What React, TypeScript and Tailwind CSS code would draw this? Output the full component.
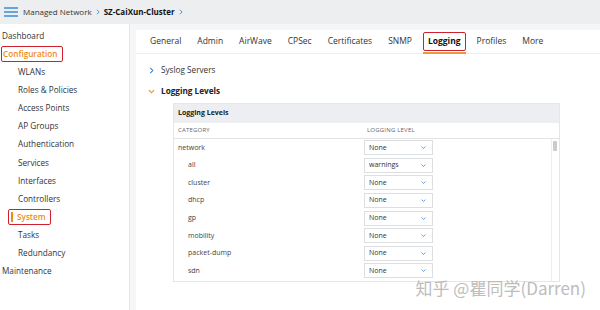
import { FC } from 'react';

const sans = { fontFamily: '"Open Sans", "Noto Sans", "Liberation Sans", sans-serif' };

const subItems = [
  'WLANs',
  'Roles & Policies',
  'Access Points',
  'AP Groups',
  'Authentication',
  'Services',
  'Interfaces',
  'Controllers',
];

const tabs = ['General', 'Admin', 'AirWave', 'CPSec', 'Certificates', 'SNMP', 'Logging', 'Profiles', 'More'];

const rows = [
  { name: 'network', level: 'None', indent: false },
  { name: 'all', level: 'warnings', indent: true },
  { name: 'cluster', level: 'None', indent: true },
  { name: 'dhcp', level: 'None', indent: true },
  { name: 'gp', level: 'None', indent: true },
  { name: 'mobility', level: 'None', indent: true },
  { name: 'packet-dump', level: 'None', indent: true },
  { name: 'sdn', level: 'None', indent: true },
];

const Chevron: FC<{ dir: 'right' | 'down'; className?: string }> = ({ dir, className }) => (
  <svg width="7" height="7" viewBox="0 0 8 8" className={className}>
    {dir === 'right' ? (
      <path d="M2.5 1 L5.5 4 L2.5 7" fill="none" stroke="currentColor" strokeWidth="1.2" />
    ) : (
      <path d="M1 2.5 L4 5.5 L7 2.5" fill="none" stroke="currentColor" strokeWidth="1.2" />
    )}
  </svg>
);

const Sidebar: FC = () => (
  <aside className="w-[130px] shrink-0 border-r border-[#e4e6e8] bg-white pt-[3px] text-[8.2px] text-[#333]">
    <div className="flex h-[18.1px] items-center pl-[2px]">Dashboard</div>
    <div className="flex h-[18.1px] items-center">
      <span className="ml-[1px] flex h-[16px] items-center rounded-[2px] border-[1.5px] border-[#d0202e] pl-[1px] pr-[5px] font-semibold text-[#ef8a17]">
        Configuration
      </span>
    </div>
    {subItems.map((item) => (
      <div key={item} className="flex h-[18.1px] items-center pl-[18px]">
        {item}
      </div>
    ))}
    <div className="flex h-[18.1px] items-center">
      <span className="ml-[8px] flex h-[16px] items-center rounded-[2px] border-[1.5px] border-[#d0202e] pl-[2px] pr-[4px] font-semibold text-[#ef8a17]">
        <span className="mr-[4px] h-[10px] w-[2px] bg-[#ef8a17]" />
        System
      </span>
    </div>
    <div className="flex h-[18.1px] items-center pl-[18px]">Tasks</div>
    <div className="flex h-[18.1px] items-center pl-[18px]">Redundancy</div>
    <div className="flex h-[18.1px] items-center pl-[2px]">Maintenance</div>
  </aside>
);

const Select: FC<{ value: string }> = ({ value }) => (
  <div className="flex h-[15px] w-[69px] items-center justify-between border border-[#dcdfe2] bg-white pl-[4px] pr-[6px] text-[7px] text-[#333]">
    <span>{value}</span>
    <Chevron dir="down" className="h-[5px] w-[5px] text-[#3b7bbf]" />
  </div>
);

const LoggingTable: FC = () => (
  <div className="ml-[37px] w-[387px] border border-[#e4e6e8] bg-white">
    <div className="flex h-[19px] items-center bg-[#eceef1] pl-[4px] text-[7px] font-bold text-[#222]">
      Logging Levels
    </div>
    <div className="flex h-[16px] items-center border-b border-[#e1e3e5] text-[6px] tracking-[0.2px] text-[#666]">
      <span className="w-[193px] pl-[4px]">CATEGORY</span>
      <span>LOGGING LEVEL</span>
    </div>
    <div className="flex">
      <div className="flex-1 pb-[1px]">
        {rows.map((row) => (
          <div key={row.name} className="flex h-[17.6px] items-center text-[7px] text-[#444]">
            <span className={`w-[190px] ${row.indent ? 'pl-[14px]' : 'pl-[4px]'}`}>{row.name}</span>
            <Select value={row.level} />
          </div>
        ))}
      </div>
      <div className="mr-[2px] w-[6px] border-l border-[#eceef0] pt-[2px]">
        <div className="mx-auto h-[10px] w-[4px] rounded-[1px] bg-[#c9cbcd]" />
      </div>
    </div>
  </div>
);

const Content: FC = () => (
  <main className="flex-1 bg-[#f5f6f7] pl-[6px] pt-[6px]">
    <div className="h-full bg-white">
      <nav className="flex h-[24px] items-center border-b border-[#eceef0] pl-[6px] text-[8.5px] text-[#333]">
        {tabs.map((tab) =>
          tab === 'Logging' ? (
            <div key={tab} className="relative mx-[3px] flex h-[19px] items-center">
              <span className="flex h-[19px] items-center rounded-[2px] border-[1.5px] border-[#d0202e] px-[4px] font-bold text-[#111]">
                {tab}
              </span>
              <span className="absolute bottom-[-3px] left-0 right-0 h-[2px] bg-[#e89a3c]" />
            </div>
          ) : (
            <span key={tab} className="px-[8px]">
              {tab}
            </span>
          ),
        )}
      </nav>
      <div className="pl-[12px] pt-[7px]">
        <div className="flex h-[18px] items-center gap-[6px] text-[8.2px] text-[#333]">
          <Chevron dir="right" className="text-[#3b7bbf]" />
          <span>Syslog Servers</span>
        </div>
        <div className="mt-[3px] flex h-[18px] items-center gap-[6px] text-[8.2px] font-bold text-[#222]">
          <Chevron dir="down" className="text-[#ef8a17]" />
          <span>Logging Levels</span>
        </div>
      </div>
      <div className="pt-[3px]">
        <LoggingTable />
      </div>
    </div>
  </main>
);

export default function App() {
  return (
    <div className="relative flex h-[310px] w-[600px] flex-col overflow-hidden bg-white" style={sans}>
      <header className="flex h-[24px] shrink-0 items-center gap-[3px] bg-[#eceef0] pl-[4px] text-[8px] text-[#333]">
        <svg width="14" height="10" viewBox="0 0 14 10" className="mr-[2px]">
          <path d="M0 1 H14 M0 5 H14 M0 9 H14" stroke="#3b8fd4" strokeWidth="1.3" />
        </svg>
        <span>Managed Network</span>
        <Chevron dir="right" className="h-[6px] w-[6px] text-[#3b8fd4]" />
        <span className="font-bold text-[#111]">SZ-CaiXun-Cluster</span>
        <Chevron dir="right" className="h-[6px] w-[6px] text-[#3b8fd4]" />
      </header>
      <div className="flex flex-1">
        <Sidebar />
        <Content />
      </div>
      <div
        className="absolute bottom-[10px] right-[14px] text-[17px] text-[#bdbdbd]"
        style={{ fontFamily: '"Noto Sans CJK SC", "Noto Sans", sans-serif' }}
      >
        知乎 @瞿同学(Darren)
      </div>
    </div>
  );
}
